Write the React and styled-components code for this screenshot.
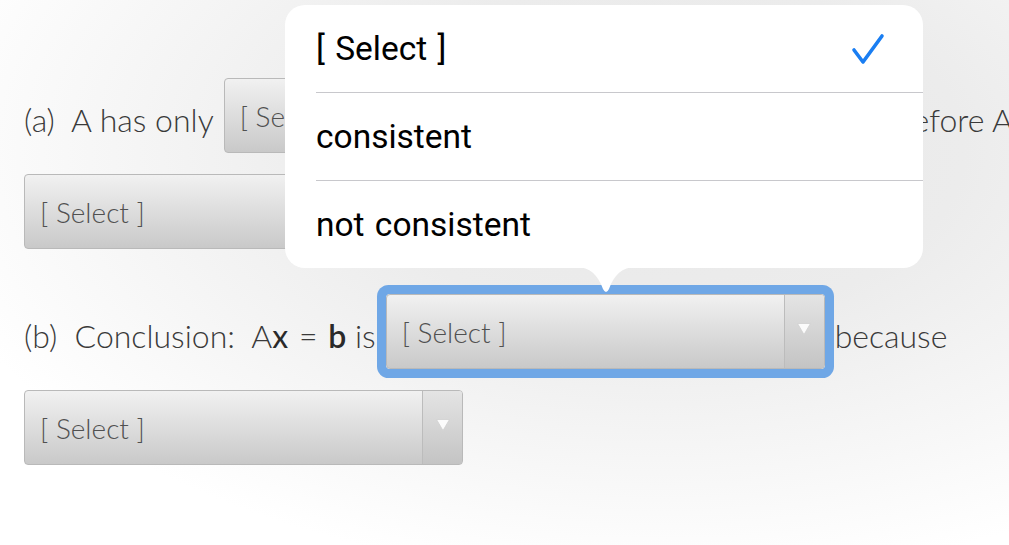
import React from 'react';
import styled, { createGlobalStyle } from 'styled-components';

const GlobalStyle = createGlobalStyle`
  html, body {
    margin: 0;
    padding: 0;
    width: 100%;
    height: 100%;
    overflow: hidden;
  }
  body {
    font-family: Lato, "Open Sans", sans-serif;
    background: #ffffff;
  }
`;

const Page = styled.div`
  position: relative;
  width: 1009px;
  height: 545px;
  overflow: hidden;
  box-sizing: border-box;
  padding: 78px 0 0 24px;
  background: radial-gradient(ellipse 760px 430px at 660px 150px, #e8e8e8 0%, #ececec 40%, #f7f7f7 75%, #ffffff 100%);
`;

const Question = styled.div`
  display: flex;
  flex-direction: column;
  gap: 21px;
  margin-bottom: ${(p) => (p.last ? 0 : 45)}px;
`;

const Row = styled.div`
  display: flex;
  align-items: center;
  white-space: nowrap;
`;

const Text = styled.span`
  font-family: Lato, sans-serif;
  font-weight: 300;
  font-size: 32px;
  color: #3a3a3a;
  padding-top: 7px;
`;

const Var = styled.span`
  font-weight: ${(p) => (p.bold ? 600 : 400)};
  color: #2a2a2a;
`;

const Op = styled.span`
  margin: 0 2px;
`;

const SelectBox = styled.div`
  flex: none;
  display: flex;
  box-sizing: border-box;
  width: ${(p) => p.width || 439}px;
  height: 75px;
  margin: ${(p) => (p.inline ? '0 10px' : '0')};
  border: 1px solid #b9b9b9;
  border-radius: 4px;
  background: linear-gradient(#f1f1f1, #c9c9c9);
  box-shadow: ${(p) => (p.focused ? '0 0 0 9px #6fa7e6' : 'none')};
`;

const Value = styled.span`
  flex: 1;
  display: flex;
  align-items: center;
  padding-left: 15px;
  font-family: Lato, sans-serif;
  font-weight: 300;
  font-size: 28px;
  color: #505050;
`;

const ArrowArea = styled.span`
  width: 40px;
  display: flex;
  justify-content: center;
  padding-top: 27px;
  box-sizing: border-box;
  border-left: 1px solid #bcbcbc;
  background: linear-gradient(#e4e4e4, #c4c4c4);
  border-radius: 0 3px 3px 0;
`;

const Select = ({ width, inline, focused }) => (
  <SelectBox width={width} inline={inline} focused={focused}>
    <Value>[ Select ]</Value>
    <ArrowArea>
      <svg width="16" height="14" viewBox="0 0 16 14">
        <path d="M1.5 1.5 L14.5 1.5 L8 12.5 Z" fill="#fbfbfb" stroke="#cfcfcf" strokeWidth="0.8" strokeLinejoin="round" />
      </svg>
    </ArrowArea>
  </SelectBox>
);

const Popover = styled.div`
  position: absolute;
  left: 285px;
  top: 5px;
  width: 638px;
  height: 263px;
  background: #ffffff;
  border-radius: 20px;
  z-index: 2;
`;

const PopArrow = styled.svg`
  position: absolute;
  left: 291px;
  bottom: -26px;
`;

const OptionList = styled.div`
  display: flex;
  flex-direction: column;
  padding-left: 31px;
  height: 100%;
  overflow: hidden;
  border-radius: 20px;
`;

const Option = styled.div`
  display: flex;
  align-items: center;
  justify-content: space-between;
  height: 88px;
  padding-right: 38px;
  border-bottom: 1px solid #c8c8cc;
  box-sizing: border-box;
  flex: none;
  font-family: Roboto, "Noto Sans", sans-serif;
  font-size: 33.5px;
  color: #000;
  word-spacing: 2px;
`;

const options = ['[ Select ]', 'consistent', 'not consistent'];

export default function App() {
  return (
    <>
      <GlobalStyle />
      <Page>
        <Question>
          <Row>
            <Text>(a)&nbsp; A has only</Text>
            <Select inline />
            <Text>pivot, and so therefore A</Text>
          </Row>
          <Row>
            <Select />
          </Row>
        </Question>
        <Question last>
          <Row>
            <Text>
              (b)&nbsp; Conclusion:&nbsp; A<Var>x</Var> <Op>=</Op> <Var bold>b</Var> is
            </Text>
            <Select inline focused />
            <Text>because</Text>
          </Row>
          <Row>
            <Select />
          </Row>
        </Question>

        <Popover>
          <OptionList>
            {options.map((o, i) => (
              <Option key={o}>
                {o}
                {i === 0 && (
                  <svg width="34" height="32" viewBox="0 0 34 32">
                    <path d="M3 17 L12 29 L31 3" fill="none" stroke="#1a7ef2" strokeWidth="3.6" strokeLinecap="round" strokeLinejoin="round" />
                  </svg>
                )}
              </Option>
            ))}
          </OptionList>
          <PopArrow width="60" height="27" viewBox="0 0 60 27">
            <path d="M0 0 C 14 0, 22 8, 27 22 Q 30 28, 33 22 C 38 8, 46 0, 60 0 Z" fill="#ffffff" />
          </PopArrow>
        </Popover>
      </Page>
    </>
  );
}
